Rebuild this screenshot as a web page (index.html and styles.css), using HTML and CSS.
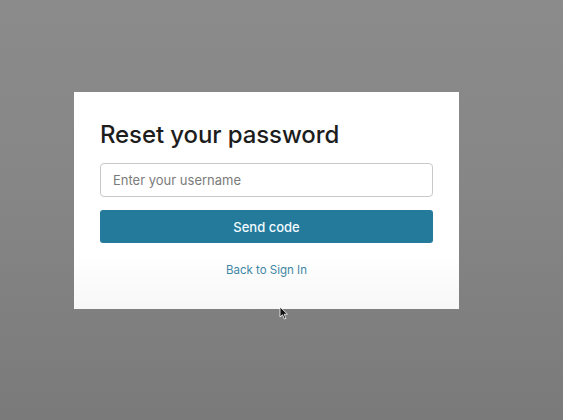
FILE: index.html
```html
<!DOCTYPE html>
<html lang="en">
<head>
<meta charset="utf-8">
<title>Reset your password</title>
<link rel="stylesheet" href="styles.css">
</head>
<body>
<div class="stage">
  <div class="card">
    <h1 class="title">Reset your password</h1>
    <input class="field" type="text" placeholder="Enter your username">
    <button class="btn" type="button">Send code</button>
    <a class="link" href="#">Back to Sign In</a>
    <svg class="cursor" width="10" height="14" viewBox="0 0 10 14" aria-hidden="true">
      <path d="M1 1 L1 11 L3.5 8.8 L5.4 13 L7 12.3 L5.2 8.2 L8.5 8.2 Z" fill="#111" stroke="#fff" stroke-width="0.8"/>
    </svg>
  </div>
</div>
</body>
</html>
```
FILE: styles.css
```css
html, body {
  margin: 0;
  padding: 0;
}
body {
  width: 563px;
  height: 420px;
  overflow: hidden;
  background: linear-gradient(180deg, #8b8b8b 0%, #868686 45%, #7a7a7a 100%);
  font-family: Inter, "Liberation Sans", sans-serif;
}
.stage {
  padding: 92px 0 0 74px;
}
.card {
  position: relative;
  box-sizing: border-box;
  width: 385px;
  height: 217px;
  padding: 29px 26px 0 26px;
  background: linear-gradient(180deg, #ffffff 0%, #ffffff 75%, #f7f7f7 100%);
  display: flex;
  flex-direction: column;
}
.title {
  margin: 0 0 14px 0;
  font-size: 24px;
  line-height: 28px;
  font-weight: 500;
  color: #1d1d1d;
  letter-spacing: -0.1px;
}
.field {
  box-sizing: border-box;
  height: 34px;
  width: 100%;
  margin: 0;
  padding: 0 12px;
  border: 1px solid #c9c9c9;
  border-radius: 4px;
  background: #fff;
  font-family: inherit;
  font-size: 13px;
  color: #333;
  outline: none;
}
.field::placeholder {
  color: #7b7b7b;
}
.btn {
  box-sizing: border-box;
  margin: 13px 0 0 0;
  height: 33px;
  width: 100%;
  border: none;
  border-radius: 3px;
  background: #237a9b;
  color: #f2fbff;
  font-family: inherit;
  font-size: 13px;
  font-weight: 500;
}
.link {
  align-self: center;
  margin-top: 19px;
  font-size: 11.5px;
  line-height: 16px;
  color: #3f86a4;
  text-decoration: none;
}
.cursor {
  position: absolute;
  left: 205px;
  top: 214px;
}
```
